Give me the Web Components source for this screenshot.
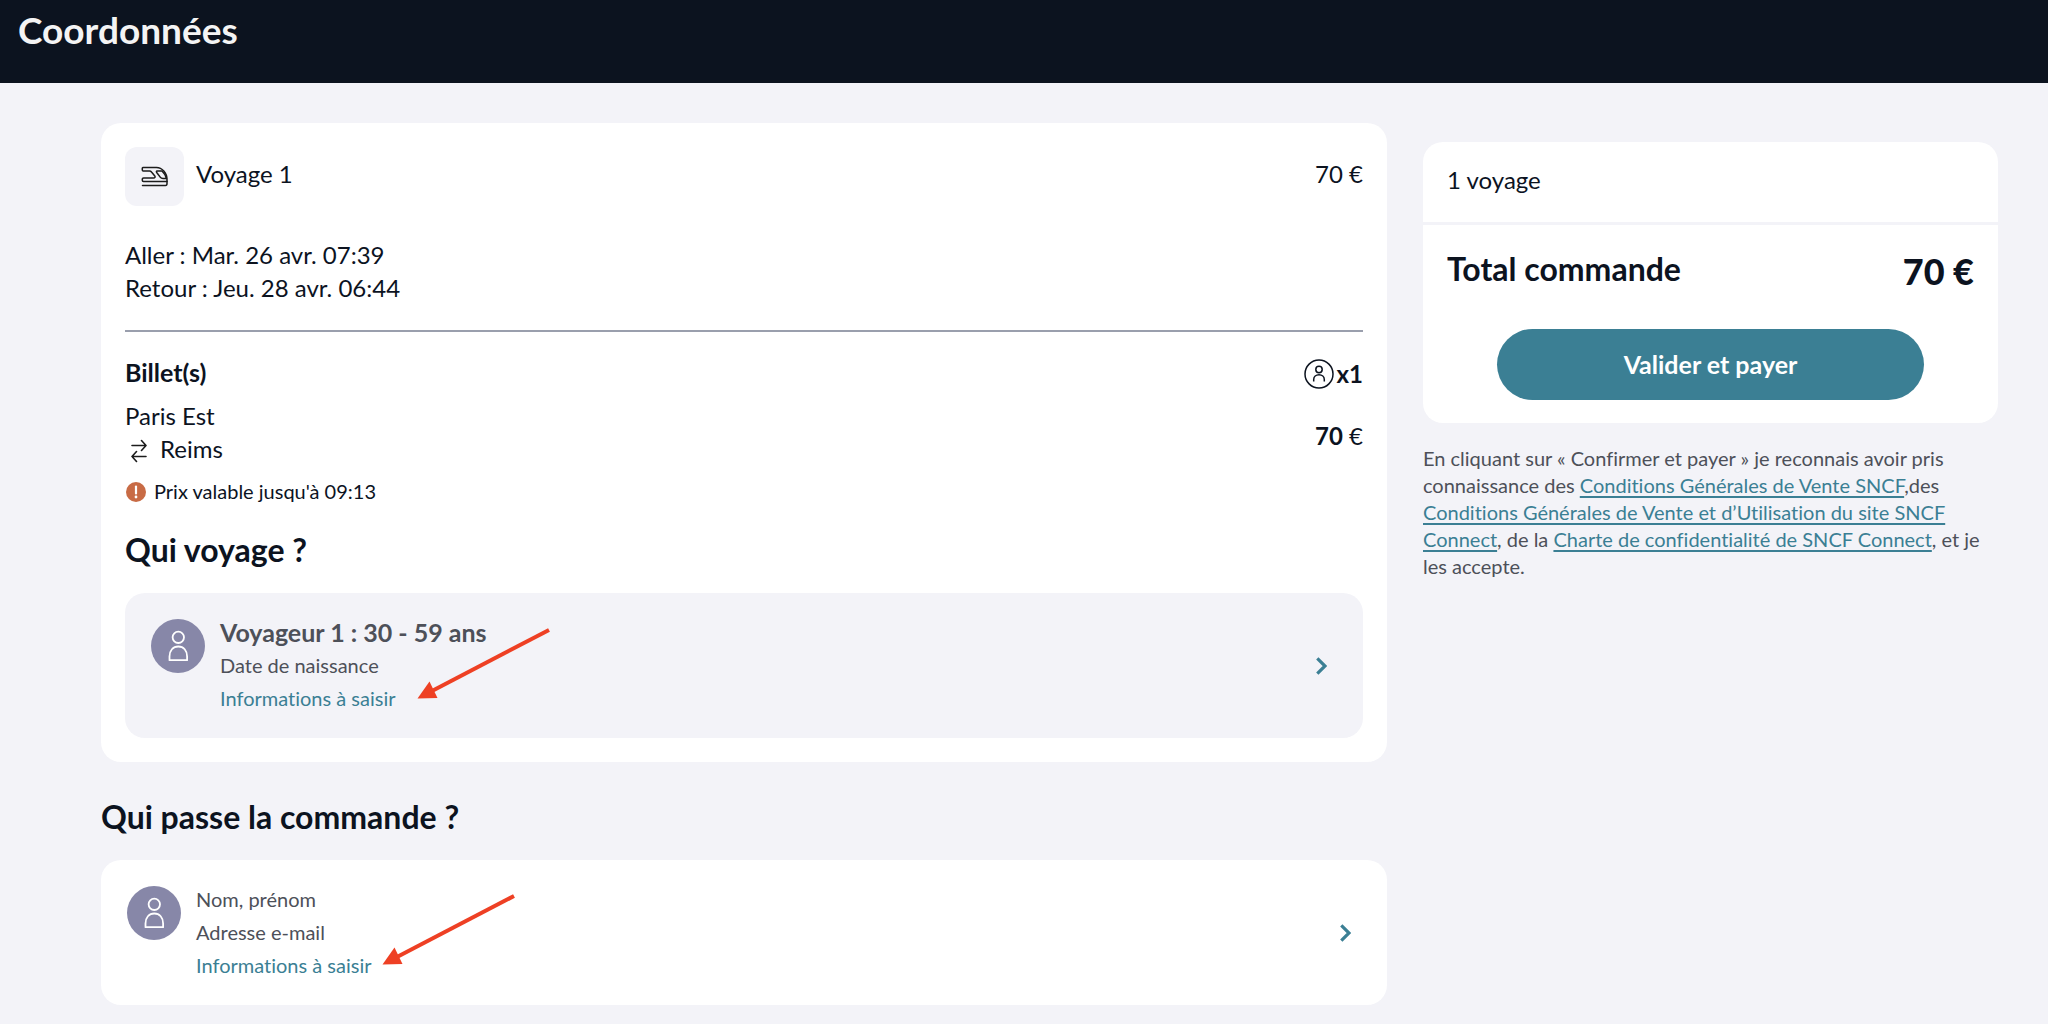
<!DOCTYPE html>
<html lang="fr">
<head>
<meta charset="utf-8">
<title>Coordonnées</title>
<style>
  html { background: #f3f3f8; }
  body {
    margin: 0;
    font-family: Lato, "Open Sans", sans-serif;
    font-size: 24px;
    line-height: 33px;
    font-variant-ligatures: none;
    color: #0c131f;
    --muted: #4d5059;
    --accent: #3b7f94;
    --surface: #f3f3f8;
  }
</style>
</head>
<body>
<checkout-page></checkout-page>

<template id="t-page">
  <style>
    :host { display: block; }
    main { display: grid; grid-template-columns: minmax(0, 1286fr) minmax(0, 575fr); gap: 36px; align-items: start; padding: 40px 50px 19px 101px; }
    h2 { margin: 35px 0 23px; font-size: 32px; line-height: 40px; font-weight: 700; }
    order-summary { margin-top: 19px; }
    person-panel { --panel: #fff; }
  </style>
  <page-header>Coordonnées</page-header>
  <main>
    <div>
      <trip-card></trip-card>
      <section>
        <h2>Qui passe la commande ?</h2>
        <person-panel style="--arrow-left: 280px; --arrow-top: 34px">
          <span slot="line">Nom, prénom</span>
          <span slot="line">Adresse e-mail</span>
        </person-panel>
      </section>
    </div>
    <order-summary></order-summary>
  </main>
</template>

<template id="t-header">
  <style>
    :host { display: block; background: #0c131f; color: #f4f4f4; padding: 7px 18px 30px; }
    h1 { margin: 0; font-size: 37px; line-height: 46px; font-weight: 700; }
  </style>
  <header><h1><slot></slot></h1></header>
</template>

<template id="t-trip">
  <style>
    :host { display: block; background: #fff; border-radius: 20px; padding: 24px; }
    .row { display: flex; justify-content: space-between; align-items: flex-start; }
    .trip { display: flex; gap: 12px; line-height: 54px; }
    .tile { width: 59px; height: 59px; border-radius: 12px; background: var(--surface); display: grid; place-items: center; }
    .price { line-height: 54px; }
    p { margin: 0; }
    .dates { margin: 32px 0 26px; }
    hr { margin: 0 0 23px; border: 0; height: 2px; background: #9a9fad; }
    h3 { margin: 0; font-size: 25px; line-height: 35px; font-weight: 700; }
    .count { display: flex; align-items: center; gap: 3px; padding-top: 2px; font-weight: 700; }
    .route { margin-top: 9px; align-items: center; }
    .back { display: flex; align-items: center; gap: 13px; padding-left: 6px; }
    .back svg { margin-top: 4px; }
    .amount { padding-top: 6px; }
    .alert { display: flex; align-items: center; gap: 8px; margin-top: 12px; padding-left: 1px; font-size: 20px; line-height: 28px; }
    .alert svg { margin-top: 2px; }
    h2 { margin: 25px 0 23px; font-size: 32px; line-height: 40px; font-weight: 700; }
    svg { display: block; }
  </style>
  <div class="row">
    <div class="trip">
      <span class="tile">
        <svg width="28" height="22" viewBox="0 0 28 22" fill="none" stroke="#1c1c1c" stroke-width="1.5" stroke-linejoin="round" stroke-linecap="round" aria-hidden="true">
          <path d="M2 1.5H15.5C21 1.5 26 7 26 13.5V15.5H2.5A1.2 1.2 0 0 1 1.3 14.3V13.2A1.2 1.2 0 0 1 2.5 12H12.5C14 12 14.5 11 13.800 10L10.500 6C10 5.300 9.300 4.900 8.500 4.900H2A.8 .8 0 0 1 1.300 4.100V2.300A.8 .8 0 0 1 2 1.500Z"/>
          <path d="M16 5H21C23.500 7.500 25 10 25.500 12.500H22C20.800 12.500 20 12.200 19.400 11.400L15.700 6.500C15.200 5.700 15.400 5 16 5Z"/>
          <path d="M1.500 19.500H24.500C25.500 19.500 26 18.700 26 17.500V15.500"/>
        </svg>
      </span>
      <span>Voyage 1</span>
    </div>
    <span class="price">70 €</span>
  </div>
  <div class="dates">
    <p>Aller : Mar. 26 avr. 07:39</p>
    <p>Retour : Jeu. 28 avr. 06:44</p>
  </div>
  <hr>
  <div class="row">
    <h3>Billet(s)</h3>
    <div class="count">
      <svg width="30" height="30" viewBox="0 0 30 30" fill="none" stroke="#0c131f" stroke-width="1.500" aria-hidden="true">
        <circle cx="15" cy="15" r="14"/>
        <circle cx="15" cy="10.500" r="3.200"/>
        <path d="M9.700 22.500V20.500C9.700 17.800 12 15.800 15 15.800S20.300 17.800 20.300 20.500V22.500"/>
      </svg>
      <span>x1</span>
    </div>
  </div>
  <div class="row route">
    <div>
      <p>Paris Est</p>
      <p class="back">
        <svg width="16" height="24" viewBox="0 0 16 24" fill="none" stroke="#1c1c1c" stroke-width="1.600" stroke-linecap="round" stroke-linejoin="round" aria-hidden="true">
          <path d="M1 6.500H15M10.500 1.500L15 6.500L10.500 11.500M15 17.500H1M5.500 12.500L1 17.500L5.500 22.500"/>
        </svg>
        <span>Reims</span>
      </p>
    </div>
    <span class="amount"><b>70</b> €</span>
  </div>
  <p class="alert">
    <svg width="20" height="20" viewBox="0 0 20 20" aria-hidden="true">
      <circle cx="10" cy="10" r="10" fill="#c86b45"/>
      <path d="M10 4.500V11.500" stroke="#fff" stroke-width="2.200" stroke-linecap="round"/>
      <circle cx="10" cy="15" r="1.400" fill="#fff"/>
    </svg>
    <span>Prix valable jusqu'à 09:13</span>
  </p>
  <h2>Qui voyage ?</h2>
  <person-panel style="--arrow-left: 291px; --arrow-top: 35px">
    <h3 slot="line">Voyageur 1 : 30 - 59 ans</h3>
    <span slot="line">Date de naissance</span>
  </person-panel>
</template>

<template id="t-person">
  <style>
    :host { display: block; }
    .panel { position: relative; display: flex; align-items: flex-start; gap: 15px; padding: 23px 36px 23px 26px; border-radius: 20px; background: var(--panel, var(--surface)); color: var(--muted); font-size: 20px; line-height: 33px; }
    .avatar { width: 54px; height: 54px; margin-top: 3px; flex: none; }
    .lines { flex: 1; display: flex; flex-direction: column; align-items: flex-start; }
    ::slotted(h3) { line-height: 33px !important; }
    a { color: var(--accent); text-decoration: none; }
    button { align-self: center; border: 0; padding: 0; background: none; cursor: pointer; }
    svg { display: block; }
    annotation-arrow { position: absolute; left: var(--arrow-left); top: var(--arrow-top); }
  </style>
  <div class="panel">
    <svg class="avatar" viewBox="0 0 54 54" fill="none" stroke="#fff" stroke-width="1.800" stroke-linejoin="round" aria-hidden="true">
      <circle cx="27" cy="27" r="27" fill="#8787a8" stroke="none"/>
      <circle cx="27.300" cy="18.300" r="5.700"/>
      <path d="M18.500 41.200V37.500C18.500 31.500 22 27.500 27.300 27.500S36.100 31.500 36.100 37.500V41.200Z"/>
    </svg>
    <div class="lines">
      <slot name="line"></slot>
      <a href="#saisir">Informations à saisir</a>
    </div>
    <button type="button" aria-label="Compléter les informations">
      <svg width="11" height="18" viewBox="0 0 11 18" fill="none" stroke="#3b7f94" stroke-width="3.200" aria-hidden="true"><path d="M1.300 1.300L9 9L1.300 16.700"/></svg>
    </button>
    <annotation-arrow></annotation-arrow>
  </div>
</template>

<template id="t-arrow">
  <style>:host { display: block; pointer-events: none; } svg { display: block; }</style>
  <svg width="136" height="72" viewBox="0 0 136 72" fill="#ee4024" aria-hidden="true">
    <path d="M1.500 70.500L13.500 53.500L21.500 70Z"/>
    <path d="M15 63.500L133 2" stroke="#ee4024" stroke-width="4"/>
  </svg>
</template>

<template id="t-summary">
  <style>
    :host { display: block; }
    .card { background: #fff; border-radius: 20px; }
    .trips { padding: 21px 24px 26px; border-bottom: 3px solid var(--surface); }
    .total { padding: 23px 24px; }
    .row { display: flex; justify-content: space-between; align-items: flex-start; font-weight: 700; }
    h2 { margin: 0; font-size: 32px; line-height: 42px; }
    strong { font-size: 36px; line-height: 46px; }
    button { display: block; width: calc(100% - 100px); height: 71px; margin: 35px auto 0; padding: 0; border: 0; border-radius: 36px; background: #3b7f94; color: #fff; font: 700 25px/33px Lato, sans-serif; cursor: pointer; }
    .legal { margin: 22px 0 0; font-size: 20px; line-height: 27px; color: var(--muted); }
    a { color: var(--accent); text-decoration: underline; text-underline-offset: 3px; text-decoration-thickness: 2px; text-decoration-skip-ink: none; }
  </style>
  <aside>
    <div class="card">
      <div class="trips">1 voyage</div>
      <div class="total">
        <div class="row"><h2>Total commande</h2><strong>70 €</strong></div>
        <button type="button">Valider et payer</button>
      </div>
    </div>
    <p class="legal">En cliquant sur « Confirmer et payer » je reconnais avoir pris connaissance des <a href="#cgv">Conditions Générales de Vente SNCF</a>,des <a href="#cgvu">Conditions Générales de Vente et d’Utilisation du site SNCF Connect</a>, de la <a href="#charte">Charte de confidentialité de SNCF Connect</a>, et je les accepte.</p>
  </aside>
</template>

<script>
  const element = (name, templateId) => customElements.define(name, class extends HTMLElement {
    constructor() {
      super();
      this.attachShadow({ mode: 'open' })
        .append(document.getElementById(templateId).content.cloneNode(true));
    }
  });
  element('annotation-arrow', 't-arrow');
  element('person-panel', 't-person');
  element('page-header', 't-header');
  element('trip-card', 't-trip');
  element('order-summary', 't-summary');
  element('checkout-page', 't-page');
</script>
</body>
</html>
